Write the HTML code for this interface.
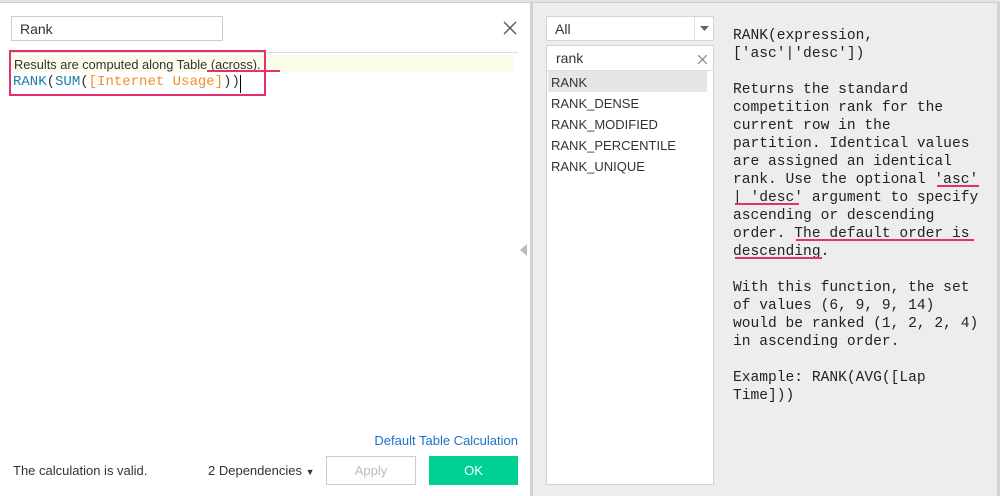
<!DOCTYPE html>
<html><head><meta charset="utf-8"><style>
*{margin:0;padding:0;box-sizing:border-box}
body{width:1000px;height:496px;overflow:hidden;background:#fff;position:relative;font-family:"Liberation Sans",sans-serif;color:#333}
.a{position:absolute}
.mono{font-family:"Liberation Mono",monospace}
.pk{position:absolute;background:#e4306f}
</style></head><body>
<div class="a" style="left:0;top:0;width:1000px;height:3px;background:#e2e2e2;border-bottom:1px solid #cfcfcf"></div>
<div class="a" style="left:530px;top:3px;width:3px;height:493px;background:#d0d0d0"></div>
<div class="a" style="left:533px;top:3px;width:464px;height:493px;background:#ededed"></div>
<div class="a" style="left:997px;top:3px;width:3px;height:493px;background:#d4d4d4"></div>
<!-- left -->
<div class="a" style="left:11px;top:16px;width:212px;height:25px;border:1px solid #ccc;font-size:14px;padding:4px 8px;color:#333">Rank</div>
<svg class="a" style="left:503px;top:21px" width="14" height="14"><path d="M1 1L13 13M13 1L1 13" stroke="#555" stroke-width="1.4"/></svg>
<div class="a" style="left:10px;top:52px;width:508px;height:1px;background:#ddd"></div>
<div class="a" style="left:10px;top:55px;width:503px;height:17px;background:#fcfceb"></div>
<div class="a" style="left:14px;top:57px;font-size:12.8px;color:#333;white-space:nowrap">Results are computed along Table (across).</div>
<div class="a mono" style="left:13px;top:74px;font-size:14px;white-space:nowrap;color:#333"><span style="color:#1d7ea5">RANK</span>(<span style="color:#1d7ea5">SUM</span>(<span style="color:#f28e2b">[Internet Usage]</span>))</div>
<div class="a" style="left:240px;top:75px;width:1px;height:18px;background:#000"></div>
<div class="a" style="left:9px;top:50px;width:257px;height:46px;border:2px solid #e4306f"></div>
<div class="pk" style="left:207px;top:70px;width:73px;height:2px"></div>
<svg class="a" style="left:520px;top:244px" width="8" height="12"><path d="M7 0L0 6L7 12Z" fill="#bbb"/></svg>
<div class="a" style="right:482px;top:433px;font-size:13px;color:#1a73c9;white-space:nowrap">Default Table Calculation</div>
<div class="a" style="left:13px;top:463px;font-size:13px;color:#333">The calculation is valid.</div>
<div class="a" style="left:208px;top:463px;font-size:13px;color:#333;white-space:nowrap">2 Dependencies <span style="font-size:9px">▼</span></div>
<div class="a" style="left:326px;top:456px;width:90px;height:29px;border:1px solid #ccc;font-size:13px;color:#bbb;text-align:center;line-height:27px">Apply</div>
<div class="a" style="left:429px;top:456px;width:89px;height:29px;background:#00d093;font-size:13px;color:#fff;text-align:center;line-height:29px">OK</div>
<!-- right -->
<div class="a" style="left:546px;top:16px;width:168px;height:25px;background:#fff;border:1px solid #d4d4d4;font-size:14px;padding:4px 8px">All</div>
<div class="a" style="left:694px;top:17px;width:1px;height:23px;background:#ddd"></div>
<svg class="a" style="left:700px;top:26px" width="9" height="5"><path d="M0 0H9L4.5 5Z" fill="#666"/></svg>
<div class="a" style="left:546px;top:45px;width:168px;height:440px;background:#fff;border:1px solid #d4d4d4"></div>
<div class="a" style="left:556px;top:50px;font-size:14px">rank</div>
<svg class="a" style="left:698px;top:55px" width="9" height="9"><path d="M0 0L9 9M9 0L0 9" stroke="#888" stroke-width="1.2"/></svg>
<div class="a" style="left:547px;top:70px;width:166px;height:1px;background:#ddd"></div>
<div class="a" style="left:548px;top:71px;width:159px;height:21px;background:#e6e6e6"></div>
<div class="a" style="left:551px;top:72px;font-size:13px;line-height:21px;color:#333">RANK<br>RANK_DENSE<br>RANK_MODIFIED<br>RANK_PERCENTILE<br>RANK_UNIQUE</div>
<div class="a mono" style="left:733px;top:27px;font-size:14.6px;line-height:18px;color:#222;white-space:pre">RANK(expression,
['asc'|'desc'])

Returns the standard
competition rank for the
current row in the
partition. Identical values
are assigned an identical
rank. Use the optional 'asc'
| 'desc' argument to specify
ascending or descending
order. The default order is
descending.

With this function, the set
of values (6, 9, 9, 14)
would be ranked (1, 2, 2, 4)
in ascending order.

Example: RANK(AVG([Lap
Time]))</div>
<div class="pk" style="left:937px;top:185px;width:42px;height:2px"></div>
<div class="pk" style="left:735px;top:203px;width:64px;height:2px"></div>
<div class="pk" style="left:796px;top:239px;width:178px;height:2px"></div>
<div class="pk" style="left:735px;top:257px;width:87px;height:2px"></div>
</body></html>
